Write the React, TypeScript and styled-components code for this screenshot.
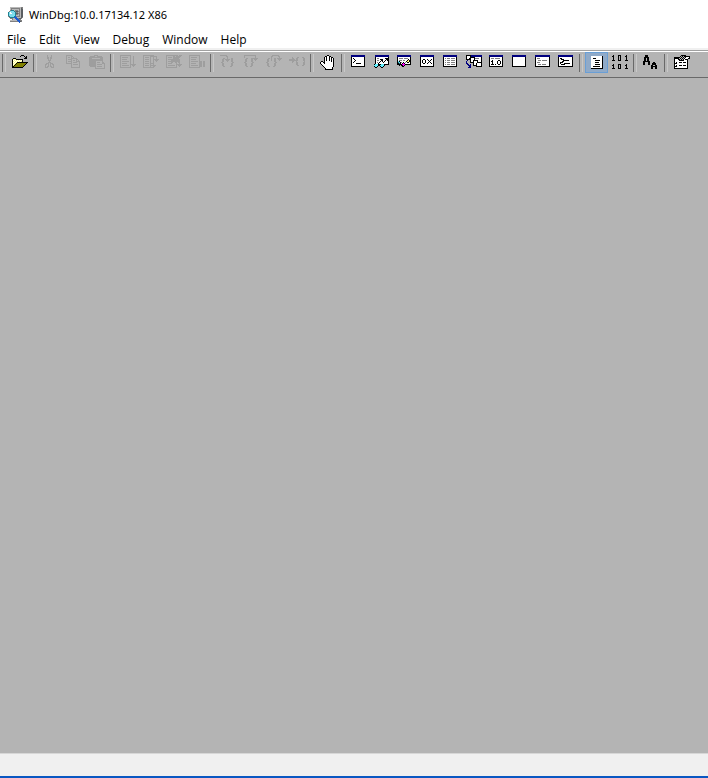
import React from "react";
import styled, { createGlobalStyle } from "styled-components";

const GlobalStyle = createGlobalStyle`
  * { box-sizing: border-box; }
  body { margin: 0; background: #b4b4b4; font-family: "Noto Sans", "Open Sans", sans-serif; font-size: 12px; color: #000; }
`;

const AppWindow = styled.div`
  min-height: 100vh;
  display: flex;
  flex-direction: column;
  background: #b4b4b4;
`;

const TitleBar = styled.header`
  display: flex;
  align-items: center;
  gap: 5px;
  height: 30px;
  padding-left: 8px;
  background: #fff;
`;

const Title = styled.h1`
  margin: 0;
  font-size: 11px;
  font-weight: 400;
  line-height: 16px;
`;

const MenuBar = styled.nav`
  display: flex;
  gap: 1px;
  height: 20px;
  padding-left: 1px;
  background: #fff;
  border-bottom: 2px solid #f0f0f0;
`;

const MenuItem = styled.button`
  border: 0;
  padding: 2px 6px 0;
  background: none;
  color: inherit;
  font-family: "Open Sans", "Noto Sans", sans-serif;
  font-size: 12px;
  line-height: 16px;
`;

const ToolBar = styled.div`
  display: flex;
  height: 28px;
  padding-bottom: 4px;
  border-top: 1px solid #a0a0a0;
  border-bottom: 1px solid #696969;
  box-shadow: inset 0 1px #fff;
`;

const ToolButton = styled.button<{ $active?: boolean }>`
  flex: 0 0 23px;
  display: flex;
  align-items: flex-start;
  height: 21px;
  margin-top: 1px;
  padding: 1px 0 0 3px;
  border: 1px solid ${(p) => (p.$active ? "#6a9fd6" : "transparent")};
  background: ${(p) => (p.$active ? "#90aac8" : "none")};
`;

const Separator = styled.div`
  flex: 0 0 8px;
  height: 18px;
  margin-top: 3px;
  &::before {
    content: "";
    display: block;
    width: 2px;
    height: 100%;
    margin-left: 2px;
    border-left: 1px solid #696969;
    border-right: 1px solid #c8c8c8;
  }
`;

const Workspace = styled.main`
  flex: 1;
`;

const StatusBar = styled.footer`
  height: 25px;
  background: #f0f0f0;
  border-top: 1px solid #d7d7d7;
  border-bottom: 2px solid #0a57c2;
`;

const PixelSvg = styled.svg`
  display: block;
  flex: none;
`;

const palette: Record<string, string> = {
  K: "#000000",
  W: "#ffffff",
  N: "#000080",
  G: "#808080",
  D: "#9e9e9e",
  O: "#808000",
  Y: "#ffff80",
  C: "#60f0ff",
  T: "#208090",
  M: "#ff00ff",
  B: "#1c5bd0",
  L: "#b8b8b8",
  S: "#80dcec",
  A: "#5a5e62",
};

function PixelIcon({ rows }: { rows: string[] }) {
  const paths: Record<string, string> = {};
  rows.forEach((row, y) => {
    for (const m of row.matchAll(/([A-Z])\1*/g)) {
      const n = m[0].length;
      paths[m[1]] = (paths[m[1]] ?? "") + `M${m.index} ${y}h${n}v1h-${n}z`;
    }
  });
  return (
    <PixelSvg width="16" height="16" viewBox="0 0 16 16" shapeRendering="crispEdges" aria-hidden="true">
      {Object.entries(paths).map(([key, d]) => (
        <path key={key} d={d} fill={palette[key]} />
      ))}
    </PixelSvg>
  );
}

const art: Record<string, string> = {
  app: `
..LLLLLLLLLLLGG.
..LGGGGGGGGGLAG.
..LGLLLLLLLGLAA.
..GTTTLGGGLGLAA.
.GSSSSTGAAGGLAA.
TSWSSSSTGGLGLAA.
TSWWSSSTAAGGLAA.
TSSSSSSTGGLGLAA.
TSSSSSCTLLLGLAA.
GTSSSCTBGGGGLAA.
.GTTTTBBBLLLLAG.
..GGGLLBBBGAAG..
....GLLLBBBGG...
..LLLLLLLBBBGG..
..GGGGGGGGBBAG..
...........B....`,
  open: `

.........KKK....
........K...K.K.
.............KK.
.KKK........KKK.
KYWYKKKKKKK.....
KWYWYWYWYWK.....
KYWYWYWYWYK.....
KWYWYKKKKKKKKKKK
KYWYKOOOOOOOOOK.
KWYKOOOOOOOOOK..
KYKOOOOOOOOOK...
KKOOOOOOOOOK....
KKKKKKKKKKK.....`,
  cut: `

....D...D.......
....D...D.......
....DD.DD.......
....DD.DD.......
.....D.D........
.....DDD........
......D.........
.....DDD........
...DDD.DDD......
..DD.D.D.DD.....
..D..D.D..D.....
..D.DD.DD.D.....
..DDD...DDD.....`,
  copy: `

DDDDDD..........
D....DD.........
D.DD.D.D........
D....DDDDDD.....
D.DDDD....DD....
D....D.DD.D.D...
D.DDDD....DDDD..
D....D.DDDD..D..
DDDDDD.......D..
.....D.DDDDD.D..
.....D.......D..
.....D.......D..
.....DDDDDDDDD..`,
  paste: `

.....DDDD.......
.DDDDD..DDDDD...
DDDDDDDDDDDDDD..
DDD........DDD..
DDDDDDDDDDDDDD..
DDDDDDDDDDDDDD..
DDDDDDD......D..
DDDDDDD.DDD..DD.
DDDDDDD......DDD
DDDDDDD.DDDDD..D
DDDDDDD........D
.DDDDDD.DDDDD..D
......D........D
......DDDDDDDDDD`,
  go: `

DDDDDDDDDDD.....
D.........D..D..
D.DDDDDD..D..D..
D.........D..D..
D.DDDDD...D..D..
D.........D..D..
D.DDDDDDD.D..D..
D.........D..D..
D.DDDDD...D..D..
D.........DDDDDD
D.DDDDDDD.D.DDD.
D.........D..D..
DDDDDDDDDDD.....`,
  restart: `

DDDDDDDDDDD.....
D......DDDDDDD..
D.DDDD.D..D..D..
D......D..D..D..
D.DDDD.D..DDDDDD
D......D..D.DDD.
D.DDDD.D..D..D..
D......D..D.....
D.DDDD.DDDD.....
D......D..D.....
D.DDDD.DDDDDD...
D......D..DD....
DDDDDDDDDDD.....`,
  stop: `

DDDDDDDDDDDD.DDD
D......DD.DDDDD.
D.DDDD.DDDDDDD..
D......DDDDDD...
D.DDDDDDDDDDDD..
D....DDDDDDDDD..
D.DDDDDDDDDDDD..
D....DD..DD.DD..
D.DDDD....D..D..
D.........DDDDDD
D.DDDDDDD.D.DDD.
D.........D..D..
DDDDDDDDDDD.....`,
  pause: `

DDDDDDDDDDD.....
D.........D.....
D.DDDDDD..D.....
D.........D.....
D.DDDDD...D.....
D.........D.....
D.DDDDDDD.DDD.DD
D.........DDD.DD
D.DDDDD...DDD.DD
D.........DDD.DD
D.DDDDDDD.DDD.DD
D.........DDD.DD
DDDDDDDDDDD.....`,
  stepIn: `

DDDDDDD.........
......DD........
.......D........
...DD..D...DD...
..DD.DDDDD.DD...
..DD..DDD..DD...
..DD...D...DD...
.DD.........DD..
..DD.......DD...
..DD.......DD...
..DD.......DD...
...DD.....DD....`,
  stepOver: `

.DDDDDDDDDDDD...
.D..........D...
.D..........D...
...DD...DDDDDDD.
..DD....DD.DDD..
..DD....DD..D...
..DD....DD......
.DD......DD.....
..DD....DD......
..DD....DD......
..DD....DD......
...DD..DD.......`,
  stepOut: `

......DDDDDDD...
.....DD.....DD..
.....D.......D..
..DD.D..DD.DDDDD
.DD..D..DD..DDD.
.DD..D..DD...D..
.DD.....DD......
DD.......DD.....
.DD.....DD......
.DD.....DD......
.DD.....DD......
..DD...DD.......`,
  runTo: `



...D....DD...DD.
...DD..DD.....DD
DDDDDD.DD.....DD
DDDDDDDDD.....DD
...DD..D.......D
...D...DD.....DD
.......DD.....DD
.......DD.....DD
........DD...DD.`,
  hand: `

.......KK.......
.....KKWWKK.....
....KWKWWKWKK...
....KWKWWKWKWK..
....KWKWWKWKWK..
....KWKWWKWKWK..
.KK.KWWWWWWKWK..
KWWKKWWWWWWWWK..
KWWWKWWWWWWWWK..
.KWWWWWWWWWWWK..
..KWWWWWWWWWWK..
...KWWWWWWWWWK..
....KWWWWWWWK...
.....KWWWWWWK...
.....KKKKKKKK...`,
  command: `

NNNNNNNNNNNNNN
NNNNNNNNNNNNNN
KWWWWWWWWWWWWK
KWKWWWWWWWWWWK
KWWKWWWWWWWWWK
KWWWKWWWWWWWWK
KWWKWWWWWWWWWK
KWKWWWWWWWWWWK
KWWWWKKKKKWWWK
KWWWWWWWWWWWWK
KWWWWWWWWWWWWK
KKKKKKKKKKKKKK`,
  watch: `

.NNNNNNNNNNNNNN
.NNNNNNNNNNNNNN
.KWWWWWWWWWWWWK
.KWGGWWWWWWKKKK
.KWWWWKKKWWWKKK
.KWGGWWKKWWKWKK
.KWWWWKWKWKWWWK
.KWGWKWWWKWWWWK
.KWWKWWWWWWWWWK
KCCCKKKCCCKKKKK
CCCCKKCCCCK....
KCCK..KCCK.....
.KK....KK......`,
  locals: `

NNNNNNNNNNNNNN
NNNNNNNNNNNNNN
KWWWWWWWWWWWWK
KWGGGGWGGGGWWK
KWWWWWWWWWWKWK
KWGGGWGGWWKYKK
KCKWWWWWWKYYKK
KTCKGWKWGWKKWK
KKTKWKMKWWWWWK
KKKKKMMMKKKKKK
..K.KKMK......
.....KK.......`,
  registers: `

NNNNNNNNNNNNNN
NNNNNNNNNNNNNN
KWWWWWWWWWWWWK
KWWWWWWWWWWWWK
KWWKKWWKWWWKWK
KWKWWKWWKWKWWK
KWKWWKWWWKWWWK
KWKWWKWWKWKWWK
KWWKKWWKWWWKWK
KWWWWWWWWWWWWK
KWWWWWWWWWWWWK
KKKKKKKKKKKKKK`,
  memory: `

NNNNNNNNNNNNNN
NNNNNNNNNNNNNN
KWWWWWWWWWWWWK
KWGWGGGWGGGGWK
KWWWWWWWWWWWWK
KWGWGGGWGGGGWK
KWWWWWWWWWWWWK
KWGWGGGWGGGGWK
KWWWWWWWWWWWWK
KWGWGGGWGGGGWK
KWWWWWWWWWWWWK
KKKKKKKKKKKKKK`,
  calls: `

KKKKKNNNNNNNNNNN
KWWWKNNNNNNNNNNN
KWWWKKKKKWWWWWWK
KWWKKWWWKGGGGWWK
KKKKKWWWKWWWWWWK
.N..KWWKKKKKWWWK
N...KWWKWWWKWWWK
N...KKKKWWWKKKKK
NN.....KWWKWWWWK
.NN.N..KWWKWWWWK
..NNN..KKKKWWWWK
...NN.....KKKKKK
..NNN...........`,
  disassembly: `

NNNNNNNNNNNNNN
NNNNNNNNNNNNNN
KWWWWWWWWWWWWK
KWGGGWGGGGGWWK
KWWWWWWWWWWWWK
KWWKWWWWWKKWWK
KWKKWWWWKWWKWK
KWWKWWWWKWWKWK
KWWKWWWWKWWKWK
KWKKKWKWWKKWWK
KWWWWWWWWWWWWK
KKKKKKKKKKKKKK`,
  scratch: `

NNNNNNNNNNNNNN
NNNNNNNNNNNNNN
KWWWWWWWWWWWWK
KWWWWWWWWWWWWK
KWWWWWWWWWWWWK
KWWWWWWWWWWWWK
KWWWWWWWWWWWWK
KWWWWWWWWWWWWK
KWWWWWWWWWWWWK
KWWWWWWWWWWWWK
KWWWWWWWWWWWWK
KKKKKKKKKKKKKK`,
  processes: `

NNNNNNNNNNNNNNN
NNNNNNNNNNNNNNN
KWWWWWWWWWWWWWK
KWGGGWWWWWWWWWK
KWWWWWWWWWWWWWK
KWWGGGWGGGGGWWK
KWWWWWWWWWWWWWK
KWGGGWWWWWWWWWK
KWWWWWWWWWWWWWK
KWWGGGWGGGGWWWK
KWWWWWWWWWWWWWK
KKKKKKKKKKKKKKK`,
  browser: `

NNNNNNNNNNNNNNN
NNNNNNNNNNNNNNN
KWWWWWWWWWWWWWK
KWKKWWWWWWWWWWK
KWWKKKWWWWWWWWK
KWWWWKKKKKKWWWK
KWWWKKWWWWWWWWK
KWKKKWWWWWWWWWK
KWKWWWKKKKKKWWK
KWWKKKKWWWWWWWK
KWWWWWWWWWWWWWK
KKKKKKKKKKKKKKK`,
  source: `


..WWWWWWWWWWWK..
..WWWWWWWWWWWK..
..WWKKKWWWWWWK..
..WWWWWWWWWWWK..
..WWWWKKKKKWWK..
..WWWWWWWWWWWK..
..WWWWKKKKWWWK..
..WWWWWWWWWWWK..
..WWWWKKKKKWWK..
..WWWWWWWWWWWK..
..WWKKKKKKKWWK..
..WWWWWWWWWWWK..
..KKKKKKKKKKKK..`,
  binary: `

.K....KKK.....K.
KK....K.K....KK.
.K....K.K.....K.
.K....K.K.....K.
.K....K.K.....K.
KKK...KKK....KKK



.K....KKK.....K.
KK....K.K....KK.
.K....K.K.....K.
.K....K.K.....K.
KKK...KKK....KKK`,
  font: `

..KKK...........
..KKK...........
.KKKKK..........
.KK.KK..........
.KK.KK..........
.KK.KK..........
KKKKKKK.........
KK...KK...KK....
KK...KK..KKKK...
KK...KK..KKKK...
........KK..KK..
........KKKKKK..
........KK..KK..
........KK..KK..`,
  options: `

.......KKKKK....
......KLKLKKKKKK
KKKKKKLKLKLKWWWK
KKKKKLKLKLKWWWKK
KWWWKKLKLKWKKK..
KWWWWKKKKKWWWK..
KWWWWWWWWWWWWK..
KWKWWKKKWKKKWK..
KKKWWWWWWWWWWK..
KWWWWWWWWWWWWK..
KWKWWKKKWKKKWK..
KKKWWWWWWWWWWK..
KWWWWWWWWWWWWK..
KKKKKKKKKKKKKK..`,
};

const toRows = (name: string) => art[name].split("\n").slice(1);

type Tool = { icon: string; label: string; disabled?: boolean; active?: boolean };

const off = (icon: string, label: string): Tool => ({ icon, label, disabled: true });
const on = (icon: string, label: string): Tool => ({ icon, label });

const groups: Tool[][] = [
  [on("open", "Open source file")],
  [off("cut", "Cut"), off("copy", "Copy"), off("paste", "Paste")],
  [off("go", "Go"), off("restart", "Restart"), off("stop", "Stop debugging"), off("pause", "Break")],
  [off("stepIn", "Step into"), off("stepOver", "Step over"), off("stepOut", "Step out"), off("runTo", "Run to cursor")],
  [on("hand", "Breakpoints")],
  [
    on("command", "Command"), on("watch", "Watch"), on("locals", "Locals"), on("registers", "Registers"),
    on("memory", "Memory"), on("calls", "Call stack"), on("disassembly", "Disassembly"),
    on("scratch", "Scratch pad"), on("processes", "Processes and threads"), on("browser", "Command browser"),
  ],
  [{ icon: "source", label: "Source mode", active: true }, on("binary", "Binary mode")],
  [on("font", "Font")],
  [on("options", "Options")],
];

const menus = ["File", "Edit", "View", "Debug", "Window", "Help"];

export default function App() {
  return (
    <AppWindow>
      <GlobalStyle />
      <TitleBar>
        <PixelIcon rows={toRows("app")} />
        <Title>WinDbg:10.0.17134.12 X86</Title>
      </TitleBar>
      <MenuBar>
        {menus.map((name) => (
          <MenuItem key={name}>{name}</MenuItem>
        ))}
      </MenuBar>
      <ToolBar role="toolbar" aria-label="Debugger">
        {groups.map((tools, i) => (
          <React.Fragment key={i}>
            <Separator />
            {tools.map((t) => (
              <ToolButton key={t.icon} aria-label={t.label} disabled={t.disabled} $active={t.active} aria-pressed={t.active}>
                <PixelIcon rows={toRows(t.icon)} />
              </ToolButton>
            ))}
          </React.Fragment>
        ))}
      </ToolBar>
      <Workspace />
      <StatusBar />
    </AppWindow>
  );
}
